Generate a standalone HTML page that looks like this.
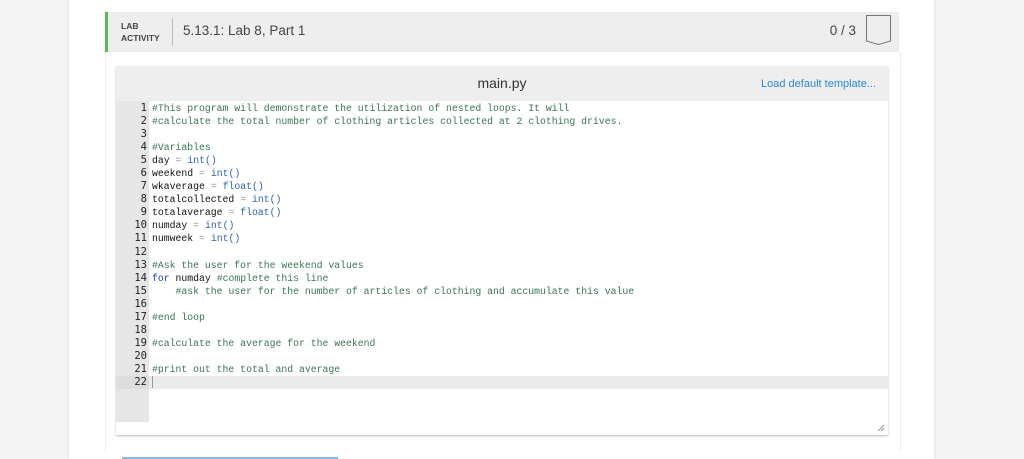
<!DOCTYPE html>
<html><head><style>
body{margin:0;width:1024px;height:459px;background:#f3f3f3;position:relative;overflow:hidden;font-family:"Liberation Sans",sans-serif}
.page{position:absolute;left:69px;top:0;width:865px;height:459px;background:#fff;box-shadow:0 0 3px #ddd}
.hdr{position:absolute;left:105px;top:12px;width:794px;height:40px;background:#eee;border-left:3px solid #5cb85c;box-sizing:border-box}
.lab{position:absolute;left:13px;top:8px;font-size:8.5px;font-weight:bold;color:#444;line-height:12px}
.sep{position:absolute;left:64px;top:6px;width:1px;height:28px;background:#bbb}
.title{position:absolute;left:75px;top:11px;font-size:13.5px;color:#444}
.score{position:absolute;right:43px;top:11px;font-size:13.5px;color:#444}
.badge{position:absolute;right:8px;top:3px;width:25px;height:30px}
.box{position:absolute;left:105px;top:52px;width:794px;height:400px;border-left:1px solid #eee;border-right:1px solid #eee}
.ed{position:absolute;left:116px;top:66px;width:772px;height:369px;background:#fff;box-shadow:0 1px 2px #bbb}
.edh{position:absolute;left:0;top:0;width:772px;height:35px;background:#eee}
.fn{position:absolute;left:0;width:772px;text-align:center;top:9px;font-size:14px;color:#333}
.ld{position:absolute;right:12px;top:12px;font-size:11px;color:#2a8ad6}
.gut{position:absolute;left:0;top:35px;width:33px;height:321px;background:#e6e6e6}
.code{position:absolute;left:0;top:36px;width:772px;font-family:"Liberation Mono",monospace;font-size:9.8px;line-height:13.05px}
.l{height:13.05px;white-space:pre;position:relative}
.n{display:inline-block;width:31px;text-align:right;color:#222;margin-right:5px;font-family:"DejaVu Sans Mono",monospace;font-size:10.5px}
.c{color:#3a7555}.k{color:#1a3bd6}.b{color:#3060b0}.o{color:#999}.v{color:#111}
.cur{background:#ebebeb}
</style></head><body>
<div class="page"></div>
<div class="hdr"><div class="lab">LAB<br>ACTIVITY</div><div class="sep"></div><div class="title">5.13.1: Lab 8, Part 1</div><div class="score">0 / 3</div>
<svg class="badge" viewBox="0 0 25 30"><path d="M0.5 0.5H24.5V26L12.5 29.5L0.5 26Z" fill="#eee" stroke="#777"/></svg></div>
<div class="box"></div>
<div class="ed"><div class="edh"><div class="fn">main.py</div><div class="ld">Load default template...</div></div>
<div class="gut"></div>
<div class="code">
<div class="l"><span class="n">1</span><span class="c">#This program will demonstrate the utilization of nested loops. It will</span></div>
<div class="l"><span class="n">2</span><span class="c">#calculate the total number of clothing articles collected at 2 clothing drives.</span></div>
<div class="l"><span class="n">3</span></div>
<div class="l"><span class="n">4</span><span class="c">#Variables</span></div>
<div class="l"><span class="n">5</span><span class="v">day</span> <span class="o">=</span> <span class="b">int()</span></div>
<div class="l"><span class="n">6</span><span class="v">weekend</span> <span class="o">=</span> <span class="b">int()</span></div>
<div class="l"><span class="n">7</span><span class="v">wkaverage</span> <span class="o">=</span> <span class="b">float()</span></div>
<div class="l"><span class="n">8</span><span class="v">totalcollected</span> <span class="o">=</span> <span class="b">int()</span></div>
<div class="l"><span class="n">9</span><span class="v">totalaverage</span> <span class="o">=</span> <span class="b">float()</span></div>
<div class="l"><span class="n">10</span><span class="v">numday</span> <span class="o">=</span> <span class="b">int()</span></div>
<div class="l"><span class="n">11</span><span class="v">numweek</span> <span class="o">=</span> <span class="b">int()</span></div>
<div class="l"><span class="n">12</span></div>
<div class="l"><span class="n">13</span><span class="c">#Ask the user for the weekend values</span></div>
<div class="l"><span class="n">14</span><span class="k">for</span> <span class="v">numday</span> <span class="c">#complete this line</span></div>
<div class="l"><span class="n">15</span>    <span class="c">#ask the user for the number of articles of clothing and accumulate this value</span></div>
<div class="l"><span class="n">16</span></div>
<div class="l"><span class="n">17</span><span class="c">#end loop</span></div>
<div class="l"><span class="n">18</span></div>
<div class="l"><span class="n">19</span><span class="c">#calculate the average for the weekend</span></div>
<div class="l"><span class="n">20</span></div>
<div class="l"><span class="n">21</span><span class="c">#print out the total and average</span></div>
<div class="l cur"><span class="n" style="background:#ddd;width:33px;margin-right:3px;box-sizing:border-box;padding-right:2px">22</span><span style="display:inline-block;width:1px;height:12px;background:#999;vertical-align:middle"></span></div>
</div>
<svg style="position:absolute;right:3px;bottom:3px" width="8" height="8"><path d="M1 7L7 1M4 7L7 4" stroke="#999"/></svg>
</div>
<div style="position:absolute;left:122px;top:457px;width:216px;height:2px;background:#7fbfea"></div>
</body></html>
